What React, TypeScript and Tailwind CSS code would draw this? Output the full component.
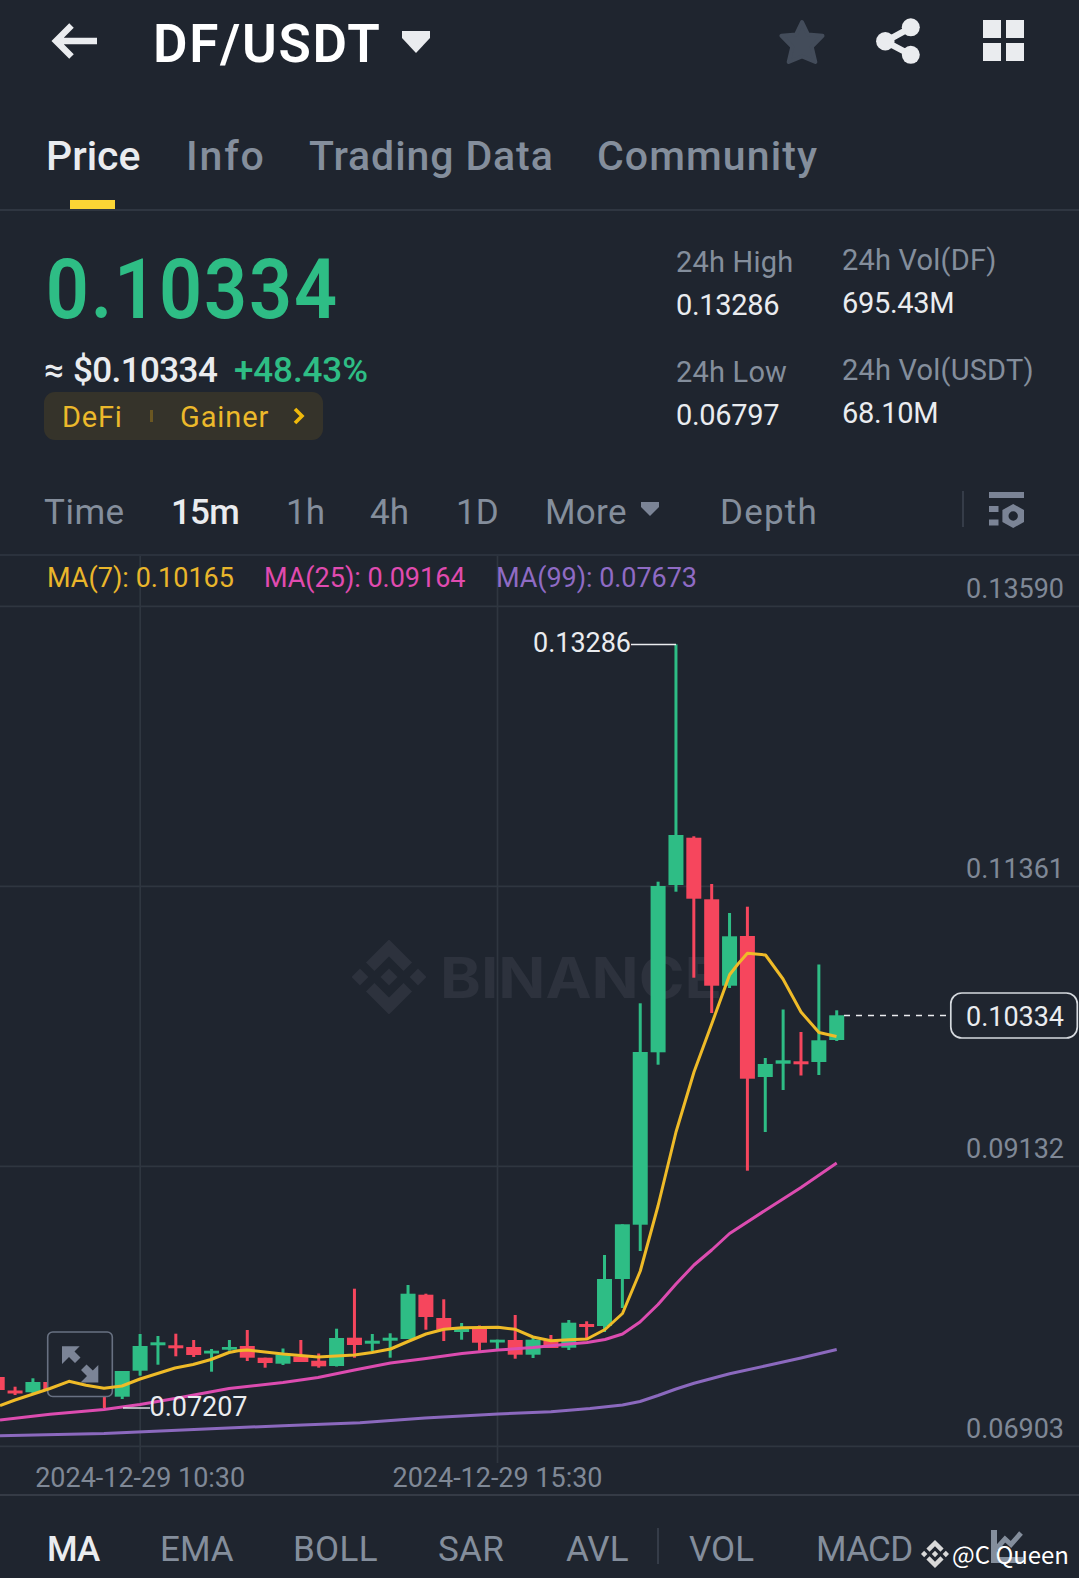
const UP = "#2ebd85";
const DOWN = "#f6465d";
const GRID = "#2f3640";

// x of the candle that sits on the 10:30 grid line, and the step between candles
const X0 = 140.1;
const STEP = 17.862;

// [slot, open/close top, open/close bottom, wick top, wick bottom, rising]
const candles: [number, number, number, number, number, boolean][] = [
  [-8, 1377, 1390, 1377, 1390, false],
  [-7, 1390.5, 1393.5, 1386.7, 1395, false],
  [-6, 1382, 1392.3, 1378.3, 1393.3, true],
  [-5, 1382, 1390, 1382, 1390, false],
  [-2, 1385, 1394, 1380, 1408, false],
  [-1, 1371, 1396.7, 1371, 1399, true],
  [0, 1346, 1370.7, 1334, 1375.7, true],
  [1, 1342.3, 1345.3, 1336, 1364.7, true],
  [2, 1345.3, 1348.3, 1333.7, 1356.3, false],
  [3, 1347, 1355, 1340, 1357, false],
  [4, 1350.7, 1353.5, 1349, 1371.7, true],
  [5, 1347, 1349.7, 1340, 1350.7, true],
  [6, 1346, 1357.7, 1330, 1361, false],
  [7, 1357.7, 1363, 1357.7, 1367.7, false],
  [8, 1354.5, 1363.7, 1348.5, 1365, true],
  [9, 1356.5, 1362, 1340, 1362, false],
  [10, 1360.7, 1366.3, 1353.5, 1367.7, false],
  [11, 1338, 1366, 1328.7, 1366.5, true],
  [12, 1337.7, 1345, 1288.7, 1357.7, false],
  [13, 1340.7, 1343.7, 1334, 1351.5, true],
  [14, 1337.7, 1340.7, 1333.3, 1357.7, true],
  [15, 1293.7, 1339, 1285, 1339, true],
  [16, 1294.7, 1317, 1293.7, 1329.7, false],
  [17, 1318, 1329.7, 1299.3, 1341, false],
  [18, 1329, 1332, 1323, 1339.7, true],
  [19, 1328.3, 1342.7, 1325.5, 1350.7, false],
  [20, 1339.7, 1342.5, 1339.7, 1349.5, true],
  [21, 1340, 1354.7, 1315, 1358.7, false],
  [22, 1339.7, 1354.7, 1338, 1358, true],
  [23, 1340.5, 1348, 1335, 1348, false],
  [24, 1322.7, 1347.7, 1320, 1350, true],
  [25, 1324, 1327, 1321.3, 1339, false],
  [26, 1279, 1326, 1255, 1332, true],
  [27, 1224.3, 1279, 1224.3, 1308, true],
  [28, 1052, 1224.7, 1003.3, 1251, true],
  [29, 886, 1052.3, 881.7, 1064.7, true],
  [30, 835, 885, 644.3, 891.7, true],
  [31, 837.7, 898.7, 836.3, 977.7, false],
  [32, 899.3, 985.7, 884, 1013, false],
  [33, 936.3, 985.7, 913, 988, true],
  [34, 936, 1078.7, 906.7, 1170.7, false],
  [35, 1064, 1077, 1058, 1132, true],
  [36, 1060.3, 1063.7, 1009.5, 1090, true],
  [37, 1061.3, 1064.3, 1032, 1075.5, false],
  [38, 1040.3, 1062, 964.5, 1075, true],
  [39, 1015.3, 1040, 1010.3, 1041, true],
];

const ma7 =
  "0,1405.5 15,1400 50,1388.5 69,1381.3 86,1385.3 104,1388.3 122,1386 140,1379 175,1368 193,1364.5 211,1359.5 229,1352.5 238,1350.8 247,1350 265,1352 283,1354 318,1357 336,1356 354.5,1355 372,1352.5 390.5,1349 408,1341.5 426,1334 444,1329.3 462,1327.7 498,1327.3 515.3,1329.3 533,1337 551,1340.8 569,1339.8 587,1339 605,1329.5 622.5,1313.5 640.3,1271 658,1206 676,1132 694,1072 711.7,1024 729.6,974.7 738,964 747.4,953.3 765.5,955 783,979 801,1012 819,1032.5 836.5,1036.5";
const ma25 =
  "0,1420 50,1414.3 104,1409.5 140,1404.5 175,1398.5 229,1388.5 283,1382.5 318,1377.5 354.5,1370 390.5,1363 426,1358.5 462,1353.5 498,1350 533,1347.5 569,1344 587,1342.5 605,1339.5 622.5,1334 640,1322 658,1304.5 676,1284 694,1265 711.7,1250 729.6,1233.5 765,1210.5 801,1187.5 836.7,1163";
const ma99 =
  "0,1435.7 104,1433.5 211,1428.7 283,1425.7 360,1422.8 425,1418 498,1414 551,1411.7 590,1408.5 622.5,1405 640,1401.5 658,1395.5 676,1389 694,1383.3 729.6,1373.7 765,1366 801,1358 836.7,1349.5";

const priceAxis = [
  { y: 606.3, label: "0.13590" },
  { y: 886.3, label: "0.11361" },
  { y: 1166.3, label: "0.09132" },
  { y: 1446.3, label: "0.06903" },
];

const timeAxis = [
  { x: 140.2, label: "2024-12-29 10:30" },
  { x: 497.5, label: "2024-12-29 15:30" },
];

function BinanceMark({ className }: { className?: string }) {
  return (
    <svg viewBox="0 0 126.6 126.6" className={className} fill="currentColor">
      <path d="M38.7 53.2l24.6-24.6 24.6 24.6 14.3-14.3L63.3 0 24.4 38.9z" />
      <path d="M0 63.3l14.3-14.3 14.3 14.3-14.3 14.3z" />
      <path d="M38.7 73.4l24.6 24.6 24.6-24.6 14.3 14.3-38.9 38.9-38.9-38.9z" />
      <path d="M98 63.3l14.3-14.3 14.3 14.3-14.3 14.3z" />
      <path d="M77.8 63.3L63.3 48.8 48.8 63.3l14.5 14.5z" />
    </svg>
  );
}

function Header() {
  return (
    <header className="flex h-[86px] items-center">
      <svg viewBox="0 0 46 36" className="-mt-1 ml-[51px] h-9 w-[46px]" fill="none" stroke="#eaecef" strokeWidth="6.4">
        <path d="M20.5 2.5L5 18l15.5 15.5M5 18h41" />
      </svg>
      <h1 className="mt-[2px] ml-[56px] w-[224px] text-[53px] leading-none font-semibold tracking-[1.7px] whitespace-nowrap text-white">
        DF/USDT
      </h1>
      <svg viewBox="0 0 28 22" className="-mt-[2px] ml-[25px] h-[22px] w-7" fill="#eaecef">
        <path d="M0 0h28v7L14 22 0 7z" />
      </svg>
      <svg viewBox="0 0 46 46" className="-mt-[3px] ml-[349px] size-[46px]" fill="#434c5a" stroke="#434c5a" strokeWidth="4" strokeLinejoin="round">
        <path d="M23 3l6 12.5 14.5 1.3-10.8 11 3.6 15.2L23 37.5 9.7 43l3.6-15.2L2.5 16.8 17 15.5z" />
      </svg>
      <svg viewBox="0 0 44 46" className="-mt-1 ml-[51px] h-[46px] w-11" fill="#eaecef">
        <path d="M35 9.5L9.5 23.5 35 37" fill="none" stroke="#eaecef" strokeWidth="6.5" />
        <circle cx="34.8" cy="9.3" r="9" />
        <circle cx="9.3" cy="23.3" r="9.2" />
        <circle cx="34.8" cy="36.8" r="9" />
      </svg>
      <div className="-mt-[5px] ml-[63px] grid grid-cols-2 gap-[5px]">
        <i className="size-[18px] bg-[#eaecef]" />
        <i className="size-[18px] bg-[#eaecef]" />
        <i className="size-[18px] bg-[#eaecef]" />
        <i className="size-[18px] bg-[#eaecef]" />
      </div>
    </header>
  );
}

function Tabs() {
  return (
    <nav className="h-[125px] border-b-2 border-[#2f3641] pt-[49px] pl-[46px] text-[41px] leading-[43px] font-medium whitespace-nowrap text-[#848e9c]">
      <div className="grid grid-cols-[140px_123px_288px_300px]">
        <span className="text-[#eaecef]">Price</span>
        <span className="tracking-[1.9px]">Info</span>
        <span className="tracking-[0.9px]">Trading Data</span>
        <span className="tracking-[1.1px]">Community</span>
      </div>
      <div className="mt-[22px] ml-6 h-[9px] w-[45px] bg-[#fcd535]" />
    </nav>
  );
}

function Stat({ label, value }: { label: string; value: string }) {
  return (
    <div className="h-[110px] text-[29px] leading-[43px] whitespace-nowrap">
      <div className="tracking-[0.2px] text-[#848e9c]">{label}</div>
      <div className="tracking-[-0.3px] text-[#eaecef]">{value}</div>
    </div>
  );
}

function Summary() {
  return (
    <section className="flex h-[259px]">
      <div className="w-[632px] pt-[37px] pl-11">
        <div className="h-[84px] w-[330px] origin-left scale-x-[0.91] pl-[2px] text-[83px] leading-[84px] font-semibold tracking-[2px] whitespace-nowrap text-[#2ebd85]">
          0.10334
        </div>
        <div className="mt-[17px] grid h-[43px] grid-cols-[29px_161px_200px] text-[35px] leading-[44px] font-medium tracking-[-0.3px] whitespace-nowrap">
          <span className="text-[#eaecef]">≈</span>
          <span className="tracking-[-0.6px] text-[#eaecef]">$0.10334</span>
          <span className="tracking-[-0.1px] text-[#2ebd85]">+48.43%</span>
        </div>
        <div className="flex h-12 w-[279px] items-center rounded-[11px] bg-[#35332a] text-[29px] leading-none text-[#ecb92b]">
          <span className="mt-[2px] ml-[18px] w-[88px] tracking-[0.8px]">DeFi</span>
          <i className="h-3 w-[3px] bg-[#6b5722]" />
          <span className="mt-[2px] ml-[27px] w-[113px] tracking-[0.9px]">Gainer</span>
          <svg viewBox="0 0 12 18" className="h-[18px] w-3" fill="none" stroke="#f0b90b" strokeWidth="3.6">
            <path d="M2 2l7 7-7 7" />
          </svg>
        </div>
      </div>
      <div className="w-[166px] pt-[30px] pl-11">
        <Stat label="24h High" value="0.13286" />
        <Stat label="24h Low" value="0.06797" />
      </div>
      <div className="pt-7 pl-11">
        <Stat label="24h Vol(DF)" value="695.43M" />
        <Stat label="24h Vol(USDT)" value="68.10M" />
      </div>
    </section>
  );
}

function Intervals() {
  return (
    <div className="flex h-[86px] items-center border-b-2 border-[#2b323d] pl-11 text-[35px] leading-none whitespace-nowrap text-[#848e9c]">
      <span className="w-[127px] tracking-[0.5px]">Time</span>
      <span className="w-[115px] font-medium tracking-[-0.8px] text-[#eaecef]">15m</span>
      <span className="w-[84px]">1h</span>
      <span className="w-[86px]">4h</span>
      <span className="w-[89px]">1D</span>
      <span className="w-[96px] tracking-[0.3px]">More</span>
      <svg viewBox="0 0 18 14" className="-mt-1.5 h-3.5 w-[18px]" fill="#7b8496">
        <path d="M0 0h18v5l-9 9-9-9z" />
      </svg>
      <span className="ml-[61px] w-[242px] tracking-[1.2px]">Depth</span>
      <i className="-mt-[6px] h-9 w-[2px] bg-[#353c48]" />
      <svg viewBox="0 0 35 36" className="-mt-1 ml-[25px] h-9 w-[35px]" fill="#7b8496">
        <path d="M0 0h35v6H0zM0 14h9.500v6H0zM0 27.500h9.500v6H0z" />
        <path fillRule="evenodd" d="M24.200 12L35 18v12l-10.800 6-10.800-6V18zM24.200 19.300a4.700 4.700 0 1 0 0 9.400 4.700 4.700 0 0 0 0-9.400z" />
      </svg>
    </div>
  );
}

function Chart() {
  return (
    <div className="h-[940px] border-b-2 border-[#353b46]">
      <svg viewBox="0 556 1079 938" className="block h-[938px] w-full" fontSize="27">
        <g stroke={GRID} strokeWidth="1.7">
          {priceAxis.map((p) => (
            <line key={p.label} x1="0" x2="1079" y1={p.y} y2={p.y} />
          ))}
          {timeAxis.map((t) => (
            <line key={t.label} x1={t.x} x2={t.x} y1="556" y2="1463" />
          ))}
        </g>

        <g fill="#2d323d" color="#2d323d">
          <svg x="351.5" y="939.5" width="75" height="75" viewBox="0 0 75 75">
            <BinanceMark />
          </svg>
          <text
            x="440"
            y="998"
            fontSize="56"
            fontWeight="700"
            fontFamily="Inter, sans-serif"
            textLength="282"
            lengthAdjust="spacingAndGlyphs"
          >
            BINANCE
          </text>
        </g>

        {candles.map(([i, top, bottom, high, low, up]) => {
          const x = X0 + i * STEP;
          return (
            <g key={i} fill={up ? UP : DOWN}>
              <rect x={x - 1.5} y={high} width="3" height={low - high} />
              <rect x={x - 7.5} y={top} width="15" height={bottom - top} />
            </g>
          );
        })}

        <rect x="47.7" y="1332" width="64.6" height="64.5" rx="5" fill="#1f252f" stroke="#687182" strokeWidth="1.6" />
        <g fill="#7b8496">
          <path d="M62 1346.3h17.7l-5.200 5.200 6 6-5.500 5.500-6-6-7 7z" />
          <path d="M98.3 1382.5V1365l-5.500 5.500-6.300-6-5.500 5.500 6 6-6.500 6.500z" />
        </g>

        <g fill="none" strokeWidth="3" strokeLinejoin="round">
          <polyline points={ma99} stroke="#8b69be" />
          <polyline points={ma25} stroke="#dc4cb0" />
          <polyline points={ma7} stroke="#efbb28" />
        </g>

        <g stroke="#eaecef">
          <line x1="631" x2="676" y1="644.5" y2="644.5" strokeWidth="1.7" />
          <line x1="123" x2="150" y1="1408" y2="1408" strokeWidth="1.4" />
          <line x1="844" x2="949" y1="1015.5" y2="1015.5" strokeWidth="1.6" strokeDasharray="6 6" />
        </g>
        <rect x="950.8" y="993" width="126.5" height="45" rx="11" fill="#1f252f" stroke="#d5d9de" strokeWidth="1.7" />

        <g fill="#eaecef">
          <text x="533" y="652" textLength="98">0.13286</text>
          <text x="149.5" y="1415.5" textLength="98">0.07207</text>
          <text x="966" y="1025.5" textLength="98">0.10334</text>
        </g>

        <text x="47" y="587" fill="#e9b62b" textLength="187">MA(7): 0.10165</text>
        <text x="264" y="587" fill="#e04bb0" textLength="201.5">MA(25): 0.09164</text>
        <text x="496" y="587" fill="#8f6bc4" textLength="201">MA(99): 0.07673</text>

        <g fill="#7f8896">
          {priceAxis.map((p) => (
            <text key={p.label} x="966" y={p.y - 8.6} textLength="98">
              {p.label}
            </text>
          ))}
          {timeAxis.map((t) => (
            <text key={t.label} x={t.x} y="1487" textAnchor="middle" textLength="210">
              {t.label}
            </text>
          ))}
        </g>
      </svg>
    </div>
  );
}

function Indicators() {
  return (
    <footer className="relative flex h-[82px] items-center overflow-hidden pt-[25px] pl-[47px] text-[35px] leading-none whitespace-nowrap text-[#848e9c]">
      <span className="w-[113px] font-medium tracking-[-1px] text-[#eaecef]">MA</span>
      <span className="w-[133px]">EMA</span>
      <span className="w-[145px] tracking-[0.3px]">BOLL</span>
      <span className="w-[128px] tracking-[0.3px]">SAR</span>
      <span className="w-[91px]">AVL</span>
      <i className="-mt-[8px] h-9 w-[2px] bg-[#353c48]" />
      <span className="ml-[30px] w-[127px]">VOL</span>
      <span className="w-[175px] tracking-[-0.7px]">MACD</span>
      <svg viewBox="0 0 32 33" className="-mt-[6px] h-[33px] w-8" fill="#848e9c">
        <path d="M0 0h6v27h26v6H0z" />
        <path d="M5 19l9-10 6 5.500L30 3" fill="none" stroke="#848e9c" strokeWidth="5" />
      </svg>
      <div className="absolute top-[44px] left-[921px] flex items-center text-white">
        <BinanceMark className="size-[28px] text-[#d9d9d9]" />
        <span className="ml-[3px] font-['Noto_Sans_CJK_SC',sans-serif] text-[24px] leading-[28px]">@C Queen</span>
      </div>
    </footer>
  );
}

export default function App() {
  return (
    <main className="h-[1578px] w-[1079px] overflow-hidden bg-[#1f252f] font-[Roboto,sans-serif]">
      <Header />
      <Tabs />
      <Summary />
      <Intervals />
      <Chart />
      <Indicators />
    </main>
  );
}
